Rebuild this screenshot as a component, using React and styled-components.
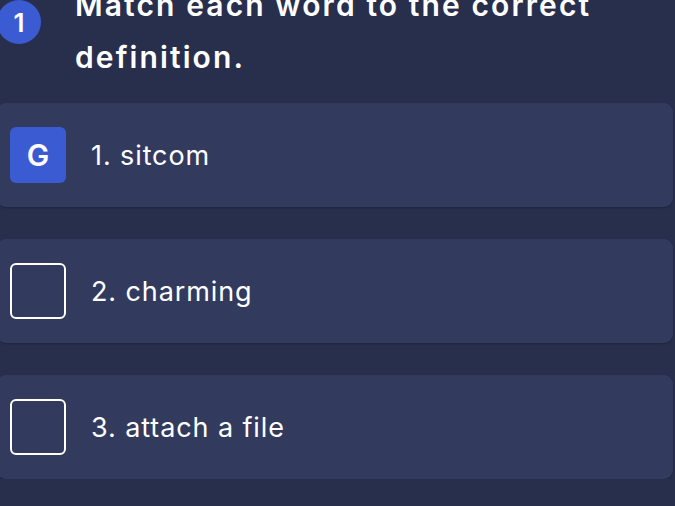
import React from "react";
import styled, { createGlobalStyle } from "styled-components";

const Global = createGlobalStyle`
  html, body {
    margin: 0;
    padding: 0;
    background: #282f4d;
    overflow: hidden;
  }
  body {
    font-family: Inter, "Noto Sans", sans-serif;
    color: #ffffff;
  }
`;

const Page = styled.div`
  width: 678px;
  margin-left: -3px;
  margin-top: -5px;
`;

const Header = styled.div`
  display: flex;
  align-items: flex-start;
  gap: 34px;
  padding-top: 20px;
  height: 75px;
`;

const Badge = styled.div`
  flex: none;
  width: 44px;
  height: 44px;
  margin-top: -15px;
  border-radius: 50%;
  background: #3b5bd3;
  display: flex;
  align-items: center;
  justify-content: center;
  font-size: 26px;
  font-weight: 600;
`;

const Title = styled.h1`
  margin: -36px 0 0;
  font-size: 30px;
  font-weight: 600;
  line-height: 52px;
  letter-spacing: 2.1px;
`;

const List = styled.div`
  display: flex;
  flex-direction: column;
  gap: 32px;
  margin-top: 13px;
  width: 676px;
`;

const Card = styled.div`
  display: flex;
  align-items: center;
  gap: 25px;
  height: 104px;
  padding-left: 13px;
  background: #323b5e;
  border-radius: 9px;
  box-shadow: 0 1px 2px rgba(0, 0, 0, 0.25);
`;

const Box = styled.div`
  flex: none;
  width: 56px;
  height: 56px;
  box-sizing: border-box;
  border-radius: 6px;
  display: flex;
  align-items: center;
  justify-content: center;
  font-size: 30px;
  font-weight: 600;
  background: ${(p) => (p.filled ? "#3b5bd3" : "transparent")};
  border: ${(p) => (p.filled ? "none" : "2px solid #ffffff")};
`;

const Label = styled.span`
  font-size: 27px;
  font-weight: 400;
  letter-spacing: 0.9px;
`;

const items = [
  { text: "1. sitcom", answer: "G" },
  { text: "2. charming", answer: "" },
  { text: "3. attach a file", answer: "" },
];

export default function App() {
  return (
    <>
      <Global />
      <Page>
        <Header>
          <Badge>1</Badge>
          <Title>
            Match each word to the correct
            <br />
            definition.
          </Title>
        </Header>
        <List>
          {items.map((it) => (
            <Card key={it.text}>
              <Box filled={!!it.answer}>{it.answer}</Box>
              <Label>{it.text}</Label>
            </Card>
          ))}
        </List>
      </Page>
    </>
  );
}
